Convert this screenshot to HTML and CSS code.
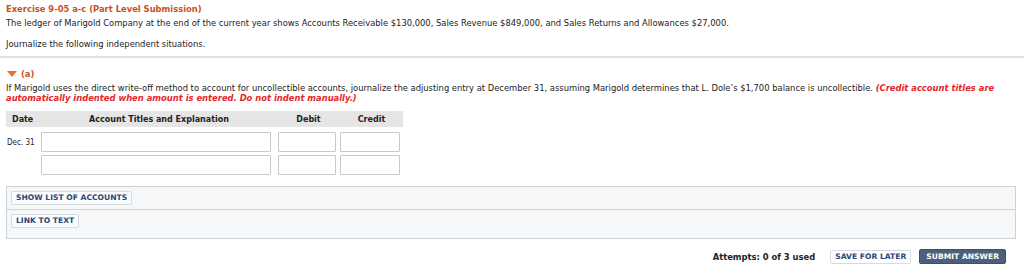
FILE: index.html
```html
<!DOCTYPE html>
<html>
  <head>
    <title>Exercise 9-05</title>
    <link rel="stylesheet" href="styles.css">
  </head>
  <body>
    <div class="page">
      <div class="intro">
        <h1 class="exercise-title">Exercise 9-05 a-c (Part Level Submission)</h1>
        <p>The ledger of Marigold Company at the end of the current year shows Accounts Receivable $130,000, Sales Revenue $849,000, and Sales Returns and Allowances $27,000.</p>
        <p class="instructions">Journalize the following independent situations.</p>
      </div>

      <div class="part">
        <div class="part-head">
          <svg class="toggle" width="10" height="6" viewBox="0 0 10 6">
            <path d="M0 0H10L5 6Z" fill="#e8712f" />
          </svg>
          <span class="part-label">(a)</span>
        </div>
        <p class="question">
          If Marigold uses the direct write-off method to account for uncollectible accounts, journalize the adjusting entry at December 31, assuming Marigold determines that L. Dole’s $1,700 balance is uncollectible.
          <em class="note">(Credit account titles are automatically indented when amount is entered. Do not indent manually.)</em>
        </p>

        <table class="journal">
          <thead>
            <tr>
              <th class="col-date">Date</th>
              <th class="col-account">Account Titles and Explanation</th>
              <th class="col-amount">Debit</th>
              <th class="col-amount">Credit</th>
            </tr>
          </thead>
          <tbody>
            <tr>
              <td class="date-cell">Dec. 31</td>
              <td><input type="text" class="field field-account" /></td>
              <td><input type="text" class="field field-debit" /></td>
              <td><input type="text" class="field field-credit" /></td>
            </tr>
            <tr>
              <td></td>
              <td><input type="text" class="field field-account" /></td>
              <td><input type="text" class="field field-debit" /></td>
              <td><input type="text" class="field field-credit" /></td>
            </tr>
          </tbody>
        </table>

        <div class="tools">
          <div class="tools-row">
            <button class="small-button">SHOW LIST OF ACCOUNTS</button>
          </div>
          <div class="tools-row">
            <button class="small-button">LINK TO TEXT</button>
          </div>
        </div>
      </div>

      <div class="footer">
        <span class="attempts">Attempts: 0 of 3 used</span>
        <button class="small-button save-button">SAVE FOR LATER</button>
        <button class="submit-button">SUBMIT ANSWER</button>
      </div>
    </div>
  </body>
</html>
```

FILE: styles.css
```css
body {
  margin: 0;
  font-family: Verdana, "DejaVu Sans", sans-serif;
  font-size: 8.4px;
  color: #222;
  background: white;
}
.page {
  width: 1024px;
}
p {
  margin: 0;
}
.intro {
  padding: 4px 6px 0 6px;
  border-bottom: 2px solid #dde0e6;
  height: 52px;
}
.exercise-title {
  font-size: 8.4px;
  font-weight: bold;
  color: #c9531d;
  margin: 0 0 3px 0;
  line-height: 11px;
}
.intro p {
  line-height: 11px;
}
.instructions {
  margin-top: 10px !important;
}
.part {
  padding: 10px 6px 0 6px;
}
.part-head {
  display: flex;
  align-items: center;
  gap: 4px;
  height: 12px;
}
.toggle {
  margin-left: 1px;
}
.part-label {
  font-weight: bold;
  color: #c9531d;
}
.question {
  line-height: 10px;
  margin-top: 3px;
}
.note {
  color: #e5262a;
  font-weight: bold;
  font-style: italic;
}
.journal {
  border-collapse: collapse;
  margin-top: 8px;
}
.journal th {
  background: #e5e5e5;
  font-weight: bold;
  font-size: 8px;
  height: 16px;
  padding: 0;
  text-align: center;
}
.journal th.col-date {
  text-align: left;
  padding-left: 6px;
  width: 29px;
}
.col-account {
  width: 236px;
}
.col-amount {
  width: 63px;
}
.journal td {
  padding: 3px 0 0 0;
  vertical-align: middle;
}
.journal tbody tr:first-child td {
  padding-top: 5px;
}
.date-cell {
  padding-left: 1px !important;
  font-size: 8px;
  font-family: Tahoma, "DejaVu Sans Condensed", sans-serif;
}
.field {
  display: block;
  box-sizing: border-box;
  height: 20px;
  border: 1px solid #c8c8c8;
  border-radius: 1px;
  background: white;
  margin: 0;
}
.field-account {
  width: 230px;
}
.field-debit {
  width: 58px;
  margin-left: 1px;
}
.field-credit {
  width: 60px;
  margin-left: 0;
}
.tools {
  margin-top: 11px;
  border: 1px solid #ccd2dc;
  background: #f6f7f9;
  width: 1008px;
}
.tools-row {
  padding: 4px 4px 4px 4px;
  height: 14px;
}
.tools-row + .tools-row {
  border-top: 1px solid #ccd2dc;
  height: 20px;
}
.small-button {
  font-family: Verdana, "DejaVu Sans", sans-serif;
  font-size: 7.6px;
  font-weight: bold;
  color: #2c4677;
  background: #fafbfc;
  border: 1px solid #d6dbe3;
  border-radius: 2px;
  height: 14px;
  padding: 0 4px;
  margin: 0;
  line-height: 12px;
}
.footer {
  display: flex;
  justify-content: flex-end;
  align-items: center;
  gap: 8px;
  padding: 10px 18px 0 0;
}
.attempts {
  font-weight: bold;
  margin-right: 7px;
}
.save-button {
  background: white;
}
.submit-button {
  font-family: Verdana, "DejaVu Sans", sans-serif;
  font-size: 7.6px;
  font-weight: bold;
  color: white;
  background: #4c5f7b;
  border: 1px solid #3e4f68;
  border-radius: 2px;
  height: 15px;
  padding: 0 6px;
}
```
